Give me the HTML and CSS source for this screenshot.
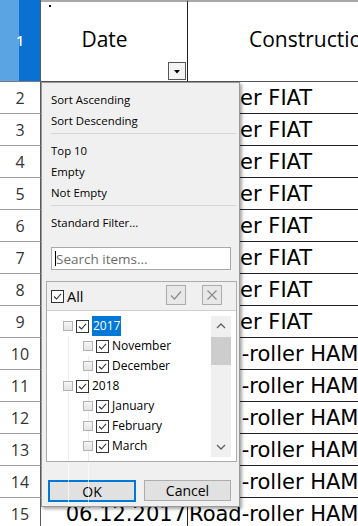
FILE: index.html
```html
<!DOCTYPE html>
<html>
<head>
<meta charset="utf-8">
<link rel="stylesheet" href="styles.css">
</head>
<body>
<div class="sheet">
  <div class="row head">
    <div class="rh rh-sel">1</div>
    <div class="ca hca"><span class="dot"></span><span class="htxt">Date</span>
      <span class="ddbtn"><svg width="16" height="16" viewBox="0 0 16 16"><path d="M5 7h6l-3 3.5z" fill="#000"/></svg></span>
    </div>
    <div class="cb hcb">Construction machine</div>
  </div>
  <div class="row"><div class="rh">2</div><div class="ca"></div><div class="cb">Grader FIAT</div></div>
  <div class="row"><div class="rh">3</div><div class="ca"></div><div class="cb">Grader FIAT</div></div>
  <div class="row"><div class="rh">4</div><div class="ca"></div><div class="cb">Grader FIAT</div></div>
  <div class="row"><div class="rh">5</div><div class="ca"></div><div class="cb">Grader FIAT</div></div>
  <div class="row"><div class="rh">6</div><div class="ca"></div><div class="cb">Grader FIAT</div></div>
  <div class="row"><div class="rh">7</div><div class="ca"></div><div class="cb">Grader FIAT</div></div>
  <div class="row"><div class="rh">8</div><div class="ca"></div><div class="cb">Grader FIAT</div></div>
  <div class="row"><div class="rh">9</div><div class="ca"></div><div class="cb">Grader FIAT</div></div>
  <div class="row"><div class="rh">10</div><div class="ca"></div><div class="cb">Road-roller HAMM</div></div>
  <div class="row"><div class="rh">11</div><div class="ca"></div><div class="cb">Road-roller HAMM</div></div>
  <div class="row"><div class="rh">12</div><div class="ca"></div><div class="cb">Road-roller HAMM</div></div>
  <div class="row"><div class="rh">13</div><div class="ca"></div><div class="cb">Road-roller HAMM</div></div>
  <div class="row"><div class="rh">14</div><div class="ca"></div><div class="cb">Road-roller HAMM</div></div>
  <div class="row"><div class="rh">15</div><div class="ca">06.12.2017</div><div class="cb">Road-roller HAMM</div></div>

  <div class="popup">
    <div class="menu">
      <div class="mi">Sort Ascending</div>
      <div class="mi">Sort Descending</div>
      <div class="sep"></div>
      <div class="mi">Top 10</div>
      <div class="mi">Empty</div>
      <div class="mi">Not Empty</div>
      <div class="sep"></div>
      <div class="mi">Standard Filter...</div>
    </div>
    <div class="search"><span class="caret"></span><span class="ph">Search items...</span></div>
    <div class="frame">
      <div class="fhead">
        <svg class="chk" width="13" height="13" viewBox="0 0 13 13"><rect x=".5" y=".5" width="12" height="12" fill="#fff" stroke="#333"/><path d="M3 6.5l2.5 2.5L10 3.8" fill="none" stroke="#333" stroke-width="1.1"/></svg>
        <span class="all">All</span>
        <span class="fbtn fb1"><svg width="18" height="18" viewBox="0 0 18 18"><path d="M4 9.5l3.5 3.5L14 5.5" fill="none" stroke="#8c8c8c" stroke-width="1.2"/></svg></span>
        <span class="fbtn fb2"><svg width="18" height="18" viewBox="0 0 18 18"><path d="M4.5 4.5l9 9M13.5 4.5l-9 9" fill="none" stroke="#8c8c8c" stroke-width="1.2"/></svg></span>
      </div>
      <div class="tree">
        <span class="tline t1"></span>
        <span class="tline t2"></span>
        <div class="tlist">
          <div class="ti l0"><span class="gb"></span><svg class="chk" width="13" height="13" viewBox="0 0 13 13"><rect x=".5" y=".5" width="12" height="12" fill="#fff" stroke="#333"/><path d="M3 6.5l2.5 2.5L10 3.8" fill="none" stroke="#333" stroke-width="1.1"/></svg><span class="tt sel">2017</span></div>
          <div class="ti l1"><span class="gb"></span><svg class="chk" width="13" height="13" viewBox="0 0 13 13"><rect x=".5" y=".5" width="12" height="12" fill="#fff" stroke="#333"/><path d="M3 6.5l2.5 2.5L10 3.8" fill="none" stroke="#333" stroke-width="1.1"/></svg><span class="tt">November</span></div>
          <div class="ti l1"><span class="gb"></span><svg class="chk" width="13" height="13" viewBox="0 0 13 13"><rect x=".5" y=".5" width="12" height="12" fill="#fff" stroke="#333"/><path d="M3 6.5l2.5 2.5L10 3.8" fill="none" stroke="#333" stroke-width="1.1"/></svg><span class="tt">December</span></div>
          <div class="ti l0"><span class="gb"></span><svg class="chk" width="13" height="13" viewBox="0 0 13 13"><rect x=".5" y=".5" width="12" height="12" fill="#fff" stroke="#333"/><path d="M3 6.5l2.5 2.5L10 3.8" fill="none" stroke="#333" stroke-width="1.1"/></svg><span class="tt">2018</span></div>
          <div class="ti l1"><span class="gb"></span><svg class="chk" width="13" height="13" viewBox="0 0 13 13"><rect x=".5" y=".5" width="12" height="12" fill="#fff" stroke="#333"/><path d="M3 6.5l2.5 2.5L10 3.8" fill="none" stroke="#333" stroke-width="1.1"/></svg><span class="tt">January</span></div>
          <div class="ti l1"><span class="gb"></span><svg class="chk" width="13" height="13" viewBox="0 0 13 13"><rect x=".5" y=".5" width="12" height="12" fill="#fff" stroke="#333"/><path d="M3 6.5l2.5 2.5L10 3.8" fill="none" stroke="#333" stroke-width="1.1"/></svg><span class="tt">February</span></div>
          <div class="ti l1"><span class="gb"></span><svg class="chk" width="13" height="13" viewBox="0 0 13 13"><rect x=".5" y=".5" width="12" height="12" fill="#fff" stroke="#333"/><path d="M3 6.5l2.5 2.5L10 3.8" fill="none" stroke="#333" stroke-width="1.1"/></svg><span class="tt">March</span></div>
        </div>
        <div class="scroll">
          <svg class="sarrow" width="20" height="20" viewBox="0 0 20 20"><path d="M6 12l4-4 4 4" fill="none" stroke="#606060" stroke-width="1.3"/></svg>
          <div class="thumb"></div>
          <div class="sspace"></div>
          <svg class="sarrow" width="20" height="20" viewBox="0 0 20 20"><path d="M6 8l4 4 4-4" fill="none" stroke="#606060" stroke-width="1.3"/></svg>
        </div>
      </div>
    </div>
    <div class="buttons">
      <div class="btn ok">OK</div>
      <div class="btn cancel">Cancel</div>
    </div>
    <span class="vline v1"></span>
    <span class="vline v2"></span>
  </div>
</div>
</body>
</html>
```
FILE: styles.css
```css
html, body {
  margin: 0;
  padding: 0;
  background: #fff;
}
body {
  width: 358px;
  height: 526px;
  overflow: hidden;
  font-family: "Open Sans", "Noto Sans", sans-serif;
}
.sheet {
  position: relative;
  width: 358px;
}
.row {
  display: flex;
  height: 32px;
}
.row.head {
  height: 82px;
}
.rh {
  width: 41px;
  flex: none;
  box-sizing: border-box;
  border-right: 1px solid #5a5a5a;
  border-bottom: 1px solid #9c9c9c;
  font-family: "Open Sans", sans-serif;
  font-size: 16px;
  color: #333;
  display: flex;
  align-items: center;
  justify-content: center;
}
.rh-sel {
  background: linear-gradient(to right, #5aa4e4 0, #5aa4e4 19px, #0a70d2 19px);
  color: #fff;
  font-size: 14px;
  font-weight: 600;
  border-bottom-color: #7a7a7a;
}
.ca {
  width: 147px;
  flex: none;
  box-sizing: border-box;
  border-right: 1px solid #222;
  border-bottom: 1px solid #222;
  font-family: "DejaVu Sans", sans-serif;
  font-size: 21px;
  line-height: 29px;
  padding-top: 2px;
  padding-right: 1px;
  text-align: right;
  white-space: nowrap;
  overflow: hidden;
  color: #000;
}
.cb {
  flex: 1;
  min-width: 0;
  box-sizing: border-box;
  border-bottom: 1px solid #222;
  font-family: "DejaVu Sans", sans-serif;
  font-size: 21px;
  line-height: 29px;
  padding-top: 2px;
  padding-left: 1px;
  white-space: nowrap;
  overflow: hidden;
  color: #000;
}
.hca, .hcb {
  border-top: 2px solid #a8a8a8;
  font-family: "Open Sans", sans-serif;
  font-size: 21px;
  display: flex;
  align-items: center;
  padding-top: 0;
  padding-bottom: 4px;
  border-bottom-color: #555;
}
.hca {
  position: relative;
  justify-content: center;
  padding-right: 19px;
  text-align: center;
}
.hcb {
  padding-left: 61px;
}
.dot {
  position: absolute;
  left: 8px;
  top: 3px;
  width: 2px;
  height: 2px;
  background: #000;
}
.ddbtn {
  position: absolute;
  left: 127px;
  top: 60px;
  width: 18px;
  height: 18px;
  box-sizing: border-box;
  border: 1px solid #555;
  background: #f4f4f4;
  display: flex;
  align-items: center;
  justify-content: center;
}

/* popup */
.popup {
  position: absolute;
  left: 41px;
  top: 82px;
  width: 199px;
  height: 425px;
  box-sizing: border-box;
  border: 1px solid #9a9a9a;
  background: #f0f0f0;
  box-shadow: 2px 2px 3px rgba(0,0,0,0.35);
  font-family: "Open Sans", sans-serif;
}
.menu {
  padding-top: 6px;
}
.mi {
  height: 21px;
  line-height: 21px;
  padding-left: 9px;
  font-size: 11.4px;
  color: #000;
}
.sep {
  margin: 2px 3px 6px 9px;
  border-top: 1px solid #d6d6d6;
}
.search {
  margin: 14px 0 0 9px;
  width: 180px;
  height: 23px;
  box-sizing: border-box;
  border: 1px solid #a9a9a9;
  background: #fff;
  display: flex;
  align-items: center;
  padding-left: 3px;
}
.caret {
  width: 1px;
  height: 15px;
  background: #000;
}
.ph {
  font-size: 13.5px;
  color: #6d6d6d;
}
.frame {
  margin: 11px 0 0 4px;
  width: 191px;
  height: 181px;
  box-sizing: border-box;
  border: 1px solid #adadad;
}
.fhead {
  height: 29px;
  box-sizing: border-box;
  border-bottom: 1px solid #cfcfcf;
  display: flex;
  align-items: center;
  padding-left: 4px;
  position: relative;
}
.all {
  font-size: 14.5px;
  margin-left: 3px;
}
.fbtn {
  position: absolute;
  top: 3px;
  width: 20px;
  height: 20px;
  box-sizing: border-box;
  border: 1px solid #adadad;
  background: #e8e8e8;
  display: flex;
  align-items: center;
  justify-content: center;
}
.fb1 { left: 119px; }
.fb2 { left: 155px; }
.tree {
  height: 150px;
  background: #fff;
  display: flex;
  position: relative;
}
.tline {
  position: absolute;
  width: 1px;
  bottom: 0;
  background: #ececec;
}
.t1 { left: 21px; top: 25px; }
.t2 { left: 41px; top: 45px; }
.tlist {
  flex: 1;
  padding-top: 5px;
  position: relative;
}
.ti {
  height: 20px;
  display: flex;
  align-items: center;
}
.l0 { padding-left: 16px; }
.l1 { padding-left: 36px; }
.gb {
  width: 10px;
  height: 10px;
  box-sizing: border-box;
  border: 1px solid #b4b4b4;
  background: linear-gradient(#f6f6f6, #e4e4e4);
  margin-right: 3px;
}
.chk {
  flex: none;
  display: block;
}
.tt {
  font-size: 12px;
  margin-left: 3px;
  line-height: 20px;
  color: #000;
}
.tt.sel {
  background: #0078d7;
  color: #fff;
  padding: 0 1px;
}
.scroll {
  width: 20px;
  margin: 5px 5px 4px 0;
  background: #f0f0f0;
  display: flex;
  flex-direction: column;
}
.sarrow {
  display: block;
  flex: none;
}
.thumb {
  height: 28px;
  margin-top: 1px;
  background: #cdcdcd;
}
.sspace {
  flex: 1;
}
.buttons {
  margin-top: 18px;
  padding-left: 6px;
  display: flex;
  gap: 8px;
  align-items: flex-start;
}
.btn {
  box-sizing: border-box;
  background: #e1e1e1;
  font-size: 14px;
  display: flex;
  align-items: center;
  justify-content: center;
  color: #000;
}
.ok {
  width: 88px;
  height: 22px;
  border: 2px solid #0078d7;
}
.cancel {
  width: 87px;
  height: 21px;
  border: 1px solid #adadad;
}
.vline {
  position: absolute;
  width: 1px;
  top: 380px;
  height: 41px;
  background: rgba(255,255,255,0.65);
}
.v1 { left: 26px; }
.v2 { left: 46px; }
```
